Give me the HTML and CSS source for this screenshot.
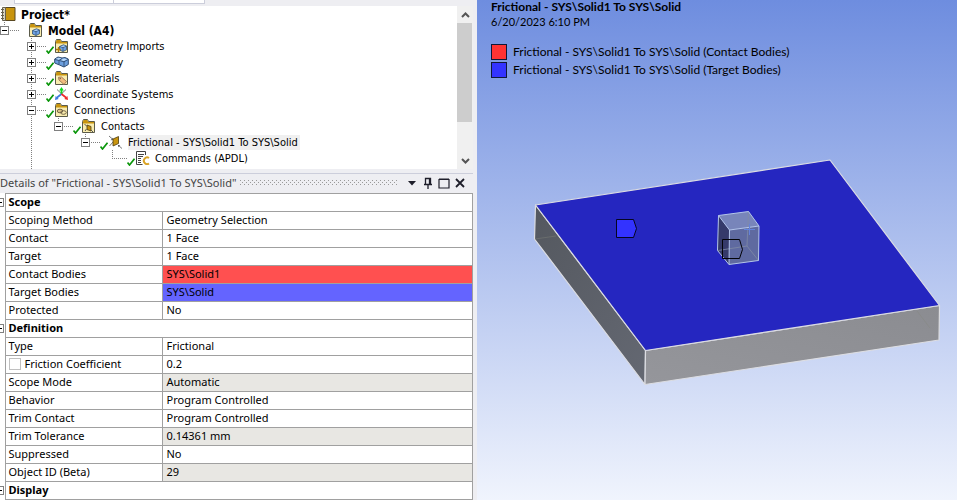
FILE: index.html
```
<!DOCTYPE html>
<html lang="en">
<head>
<meta charset="utf-8">
<title>Mechanical</title>
<link rel="stylesheet" href="styles.css">
</head>
<body>
<svg class="defs" aria-hidden="true">
  <defs>
    <symbol id="check" viewBox="0 0 8 8"><path d="M.5 4.5 2.5 7 7.5 .7" fill="none" stroke="#0a960a" stroke-width="1.7"/></symbol>
    <symbol id="folder" viewBox="0 0 15 14"><path d="M1.5 13.5V2.5l1-2h4l1 2h6v11z" fill="#f9ecae" stroke="#5b5b4a"/><path d="M2 4.5V2.6L2.8 1h3.4l1 2H13v1.5z" fill="#c8940e"/></symbol>
    <symbol id="cube" viewBox="0 0 8 8"><path d="M.5 2.5 4.5.8 7.5 2v3.800L4 7.500.5 6z" fill="#6ea2e6" stroke="#33506f" stroke-width=".8"/><path d="M.5 2.500 4 3.600 7.500 2M4 3.600v3.900" fill="none" stroke="#33506f" stroke-width=".7"/><path d="M1.500 2.500 4.500 1.400 6.500 2 4 3z" fill="#b3d3fb"/></symbol>
  </defs>
</svg>
<main class="app">
  <div class="side">
    <div class="tabs"><span class="grip"></span><span class="tab"></span><span class="tab tab-b"></span></div>
    <section class="outline" aria-label="Outline">
      <div class="tree">
        <div class="row root">
          <svg class="icon" viewBox="0 0 15 14"><path d="M4 .5h10v13H4z" fill="#c8940e" stroke="#594821"/><path d="M1.500.5h3v13h-3z" fill="#d7d3c3" stroke="#66604f"/><path d="M0 2.500h3m-3 3h3m-3 3h3m-3 3h3" stroke="#66604f"/></svg>
          <b class="label">Project*</b>
        </div>
        <ul>
          <li>
            <div class="row"><button class="box" aria-label="Collapse Model"></button><i class="dots"></i>
              <svg class="icon" viewBox="0 0 15 14"><use href="#folder"/><use href="#cube" x="4" y="5" width="8" height="8"/></svg>
              <b class="label">Model (A4)</b></div>
            <ul class="nested open">
              <li><div class="row"><button class="box plus" aria-label="Expand Geometry Imports"></button><i class="dots"></i><svg class="check"><use href="#check"/></svg>
                <svg class="icon" viewBox="0 0 15 14"><use href="#folder"/><use href="#cube" x="5" y="5" width="8" height="8"/><path d="M4.500 8v5M2 10.500h5" stroke="#b17a06" stroke-width="1.300"/></svg>
                <span class="label">Geometry Imports</span></div></li>
              <li><div class="row"><button class="box plus" aria-label="Expand Geometry"></button><i class="dots"></i><svg class="check"><use href="#check"/></svg>
                <svg class="icon" viewBox="0 0 15 14"><path d="M.7 4 4 2l4 1 3-.5 3.300 1.500v5.500L10 12l-4.500-2L.7 8z" fill="#6c9fdf" stroke="#304c70"/><path d="M1.500 4 5 2.800 7.500 3.600 4.500 5zM6 5.200l4-1.700 3.500 1-4 1.500z" fill="#b9d8fa"/><path d="M1 4.500l4 1v4M5 5.500l3-2M5.500 5.500l4.500 1.300v5M10 6.800l4-2.300" fill="none" stroke="#304c70" stroke-width=".9"/></svg>
                <span class="label">Geometry</span></div></li>
              <li><div class="row"><button class="box plus" aria-label="Expand Materials"></button><i class="dots"></i><svg class="check"><use href="#check"/></svg>
                <svg class="icon" viewBox="0 0 15 14"><use href="#folder"/><path d="M4.500 6.300l3-.3 5 4.500-2.500 3-5-4.500z" fill="#f2bd80" stroke="#8b6a4c" stroke-width=".8"/><circle cx="6.300" cy="7.600" r=".7" fill="#6b5238"/></svg>
                <span class="label">Materials</span></div></li>
              <li><div class="row"><button class="box plus" aria-label="Expand Coordinate Systems"></button><i class="dots"></i><svg class="check"><use href="#check"/></svg>
                <svg class="icon" viewBox="0 0 15 14"><path d="M3 2.500 12 11M12 2.500 3 11" stroke="#777" stroke-width="1"/><path d="M7.500 7V3" stroke="#10d820" stroke-width="1.800"/><path d="M5.200 3.500 7.500 0l2.300 3.500z" fill="#10d820"/><path d="M7.500 7 3 10.500" stroke="#3b7ae0" stroke-width="1.600"/><path d="M1 13l.6-4L4.700 12z" fill="#3b7ae0"/><path d="M7.500 7l4.500 3.500" stroke="#f02828" stroke-width="1.600"/><path d="M14 13l-3.700-1 3.100-3z" fill="#f02828"/></svg>
                <span class="label">Coordinate Systems</span></div></li>
              <li><div class="row"><button class="box" aria-label="Collapse Connections"></button><i class="dots"></i><svg class="check"><use href="#check"/></svg>
                <svg class="icon" viewBox="0 0 15 14"><use href="#folder"/><g fill="#d8c184" stroke="#74664a"><ellipse cx="6" cy="8" rx="2.800" ry="1.800"/><ellipse cx="9.500" cy="9.500" rx="2.800" ry="1.800" fill="none"/></g></svg>
                <span class="label">Connections</span></div>
                <ul class="nested">
                  <li><div class="row"><button class="box" aria-label="Collapse Contacts"></button><i class="dots"></i><svg class="check"><use href="#check"/></svg>
                    <svg class="icon" viewBox="0 0 15 14"><use href="#folder"/><path d="M6 6l4 1.500V12L6 10.500z" fill="#c8940e" stroke="#4e3c10" stroke-width=".8"/><path d="M3.500 5 6 7.500M10 11l2 2M4 12l1.500-2" stroke="#555"/></svg>
                    <span class="label">Contacts</span></div>
                    <ul class="nested">
                      <li><div class="row"><button class="box" aria-label="Collapse Frictional contact"></button><i class="dots"></i><svg class="check"><use href="#check"/></svg>
                        <svg class="icon" viewBox="0 0 15 14"><path d="M1 1l4 3.500M14 13.500 10 10M1.500 11 5 7" stroke="#777"/><path d="M5 4 10.500 1.500v7L5 11z" fill="#c8940e" stroke="#4e3c10" stroke-width=".8"/><path d="M2.500 5.200 5 5V2.800zM10 12.200V10h2.200z" fill="#555"/></svg>
                        <span class="label selected">Frictional - SYS\Solid1 To SYS\Solid</span></div>
                        <ul class="nested">
                          <li><div class="row"><i class="dots leaf"></i><svg class="check"><use href="#check"/></svg>
                            <svg class="icon" viewBox="0 0 15 14"><path d="M10.500 4V.5h-9v13h6" fill="#fff" stroke="#444"/><path d="M3 3.500h6M3 5.500h5M3 7.500h3M3 9.500h3M3 11.500h3" stroke="#444"/><path d="M14 7a3.300 3.300 0 1 0 0 5.500" fill="none" stroke="#d9a326" stroke-width="2"/></svg>
                            <span class="label">Commands (APDL)</span></div></li>
                        </ul></li>
                    </ul></li>
                </ul></li>
            </ul>
          </li>
        </ul>
      </div>
      <div class="scroll">
        <button aria-label="Scroll up"><svg viewBox="0 0 9 6"><path d="M1 5 4.500 1.500 8 5" /></svg></button>
        <span class="thumb"></span>
        <button class="down" aria-label="Scroll down"><svg viewBox="0 0 9 6"><path d="M1 1 4.500 4.500 8 1"/></svg></button>
      </div>
    </section>
    <section class="details">
      <header>
        <h2>Details of "Frictional - SYS\Solid1 To SYS\Solid"</h2>
        <svg class="handle" aria-hidden="true"><defs><pattern id="dotgrid" width="4" height="4" patternUnits="userSpaceOnUse"><path d="M0 0h1v1H0zM2 2h1v1H2z" fill="#999"/></pattern></defs><rect width="100%" height="100%" fill="url(#dotgrid)"/></svg>
        <button aria-label="Menu"><svg viewBox="0 0 12 12"><path d="M2 4h8L6 8.500z" fill="#1e1e2a"/></svg></button>
        <button aria-label="Pin"><svg viewBox="0 0 12 12"><path d="M3.500 7V1.500h5V7M2 7.500h8M6 8v4M7.500 2v5" fill="none" stroke="#1e1e2a" stroke-width="1.300"/></svg></button>
        <button aria-label="Maximize"><svg viewBox="0 0 12 12"><path d="M1 2.500h10v8.500H1zM1 2h10" fill="none" stroke="#1e1e2a" stroke-width="1.200"/></svg></button>
        <button aria-label="Close"><svg viewBox="0 0 12 12"><path d="M2 2l8 8M10 2l-8 8" stroke="#1e1e2a" stroke-width="1.800"/></svg></button>
      </header>
      <table>
        <colgroup><col class="gutter"><col class="name"><col></colgroup>
        <tbody>
          <tr><td class="g"><button class="box" aria-label="Collapse Scope"></button></td><th colspan="2">Scope</th></tr>
          <tr><td class="g"></td><td>Scoping Method</td><td>Geometry Selection</td></tr>
          <tr><td class="g"></td><td>Contact</td><td>1 Face</td></tr>
          <tr><td class="g"></td><td>Target</td><td>1 Face</td></tr>
          <tr><td class="g"></td><td>Contact Bodies</td><td class="red">SYS\Solid1</td></tr>
          <tr><td class="g"></td><td>Target Bodies</td><td class="blue">SYS\Solid</td></tr>
          <tr><td class="g"></td><td>Protected</td><td>No</td></tr>
          <tr><td class="g"><button class="box" aria-label="Collapse Definition"></button></td><th colspan="2">Definition</th></tr>
          <tr><td class="g"></td><td>Type</td><td>Frictional</td></tr>
          <tr><td class="g"></td><td><label><input type="checkbox">Friction Coefficient</label></td><td>0.2</td></tr>
          <tr><td class="g"></td><td>Scope Mode</td><td class="ro">Automatic</td></tr>
          <tr><td class="g"></td><td>Behavior</td><td>Program Controlled</td></tr>
          <tr><td class="g"></td><td>Trim Contact</td><td>Program Controlled</td></tr>
          <tr><td class="g"></td><td>Trim Tolerance</td><td class="ro">0.14361 mm</td></tr>
          <tr><td class="g"></td><td>Suppressed</td><td>No</td></tr>
          <tr><td class="g"></td><td>Object ID (Beta)</td><td class="ro">29</td></tr>
          <tr><td class="g"><button class="box" aria-label="Collapse Display"></button></td><th colspan="2">Display</th></tr>
        </tbody>
      </table>
    </section>
  </div>
  <section class="view">
    <div class="caption">
      <h1>Frictional - SYS\Solid1 To SYS\Solid</h1>
      <p>6/20/2023 6:10 PM</p>
      <ul class="legend">
        <li><i class="swatch s-red"></i>Frictional - SYS\Solid1 To SYS\Solid (Contact Bodies)</li>
        <li><i class="swatch s-blue"></i>Frictional - SYS\Solid1 To SYS\Solid (Target Bodies)</li>
      </ul>
    </div>
    <svg class="model" viewBox="477 150 480 250" role="img" aria-label="Plate with a small block on top">
      <defs>
        <linearGradient id="left" x1="0" y1="0" x2="1" y2="1"><stop offset="0" stop-color="#54585f"/><stop offset="1" stop-color="#646872"/></linearGradient>
        <linearGradient id="front" x1="0" y1="1" x2="1" y2="0"><stop offset="0" stop-color="#95969b"/><stop offset="1" stop-color="#8b8c91"/></linearGradient>
      </defs>
      <g stroke="#dcdde2" stroke-width="1.200" stroke-linejoin="round">
        <path d="M535.500 205 645.500 350.500 645 384.500 534.500 239z" fill="url(#left)"/>
        <path d="M645.500 350.500 939.500 305.500 939 340 645 384.500z" fill="url(#front)"/>
        <path d="M535.500 205 830 160 939.500 305.500 645.500 350.500z" fill="#2526c0"/>
      </g>
      <path d="M535 239l21-3M917 311l13 17" stroke="#85867c" fill="none" opacity=".4"/>
      <path d="M616.500 219.500h17l3 9-3 9h-17z" fill="#3333ff" stroke="#050522"/>
      <path d="M718.500 215.500 729.500 230 729 264.500 717.500 250.500z" fill="#353a6a"/>
      <path d="M729.500 230 759 226 758.500 260.500 729 264.500z" fill="#5f6aa0"/>
      <path d="M718.500 215.500 748.500 211.500 759 226 729.500 230z" fill="#7885ba"/>
      <path d="M748.500 211.500 747 246 718 250.500M747 246l11.500 14.500" fill="none" stroke="#7f8ba5" opacity=".8"/>
      <path d="M718.500 215.500 748.500 211.500 759 226 758.500 260.500 729 264.500 717.500 250.500zM718.500 215.500 729.500 230 759 226M729.500 230 729 264.500" fill="none" stroke="#b4c6e8" stroke-linejoin="round"/>
      <path d="M744 229.500h11M749.500 224v11" stroke="#6383dc"/>
      <path d="M722.500 239.500h17l3 10-3 9h-17z" fill="none" stroke="#030308"/>
    </svg>
  </section>
</main>
</body>
</html>
```
FILE: styles.css
```
* { box-sizing: border-box; }
body { margin: 0; background: #eeeef2; color: #000; font: 11px/16px "DejaVu Sans Condensed", "DejaVu Sans", sans-serif; }
ul { list-style: none; margin: 0; padding: 0; }
button { padding: 0; border: 0; background: none; }
.defs { position: absolute; width: 0; height: 0; }
.app { display: grid; grid-template-columns: minmax(0, 477fr) minmax(0, 480fr); height: 100vh; overflow: hidden; }
.side { display: flex; flex-direction: column; min-width: 0; padding-right: 4px; overflow: hidden; }

.tabs { display: flex; flex: none; height: 6px; padding-left: 14px; }
.tab { width: 100px; height: 4px; background: #fff; border: 1px solid #cccedb; border-top: 0; }
.tab-b { width: 91px; border-left: 0; }

.outline { display: flex; flex: none; height: 163px; background: #fff; }
.tree { flex: 1; overflow: hidden; white-space: nowrap; }
.row { display: flex; align-items: center; height: 16px; }
.root { padding-left: 1px; }
.icon { flex: none; width: 15px; height: 14px; margin: 0 5px 0 0; }
.label { line-height: 14px; padding-top: 1px; }
.row > b { font-size: 12px; }
.dots { flex: none; width: 9px; height: 1px; margin-left: 1px; background: repeating-linear-gradient(90deg, #808080 0 1px, transparent 1px 2px); }
.dots.leaf { width: 15px; margin-left: 4px; }
.check { flex: none; width: 8px; height: 8px; align-self: flex-end; }
.tree > ul > li > .row > .icon { margin-left: 9px; }
.nested { padding-left: 27px; }
.tree li { background: repeating-linear-gradient(#808080 0 1px, transparent 1px 2px) 4px 0 / 1px 100% no-repeat; }
.tree li:last-child { background-size: 1px 8px; }
.tree .open > li:last-child { padding-bottom: 8px; background-size: 1px 100%; }
.label.selected { padding-right: 2px; background: #f0f0f0; }
.box { flex: none; display: block; width: 9px; height: 9px; border: 1px solid #808080; background: linear-gradient(#000, #000) center / 5px 1px no-repeat, #fff; }
.plus { background: linear-gradient(#000, #000) center / 5px 1px no-repeat, linear-gradient(#000, #000) center / 1px 5px no-repeat, #fff; }

.scroll { display: flex; flex-direction: column; flex: none; width: 16px; background: #f0f0f0; }
.scroll button { height: 17px; line-height: 0; }
.scroll svg { width: 9px; height: 6px; fill: none; stroke: #555; stroke-width: 2; }
.thumb { height: 99px; background: #cdcdcd; margin-right: 1px; }
.down { margin-top: auto; }

.details { flex: 1; margin-top: 4px; border-top: 1px solid #cccedb; font: 11px/17px "Noto Sans", sans-serif; }
.details header { display: flex; align-items: center; height: 19px; padding: 0 7px 2px 0; }
.details h2 { margin: 0 4px 0 0; font-size: 11px; font-weight: 400; color: #444; white-space: nowrap; }
.handle { flex: 1; min-width: 0; height: 5px; margin-right: 4px; }
.details header button { width: 12px; height: 12px; margin-left: 4px; line-height: 0; }
.details header svg:not(.handle) { width: 12px; height: 12px; }
table { width: 100%; border-collapse: collapse; table-layout: fixed; background: #fff; }
.gutter { width: 5px; }
.name { width: 157px; }
td, th { height: 18px; padding: 0 3px 2px; border: 1px solid #a0a0a0; line-height: 15px; text-align: left; white-space: nowrap; }
td:last-child { padding-left: 4px; }
th { font-weight: 700; }
td.g { padding: 0; border: 0; background: #fff; }
.g .box { margin-left: -5px; }
.red { background: #ff5050; }
.blue { background: #6464ff; }
.ro { background: #e8e7e3; }
label { display: flex; align-items: center; gap: 4px; }
input { appearance: none; width: 12px; height: 12px; margin: 0; border: 1px solid #c0c0c0; background: #fff; }

.view { display: flex; flex-direction: column; min-width: 0; background: linear-gradient(#6e8ddf, #f0f4fd); font: 12px/18px Lato, sans-serif; }
.caption { height: 150px; padding: 0 14px; white-space: nowrap; }
h1 { margin: 0; font: 700 12px/14px Lato, sans-serif; }
.caption p { margin: 0 0 13px; font-size: 11px; line-height: 16px; }
.legend li { display: flex; align-items: center; gap: 6px; }
.swatch { width: 16px; height: 16px; border: 1px solid #101838; }
.s-red { background: #ff3333; }
.s-blue { background: #3333ff; }
.model { display: block; width: 100%; height: auto; }
```
